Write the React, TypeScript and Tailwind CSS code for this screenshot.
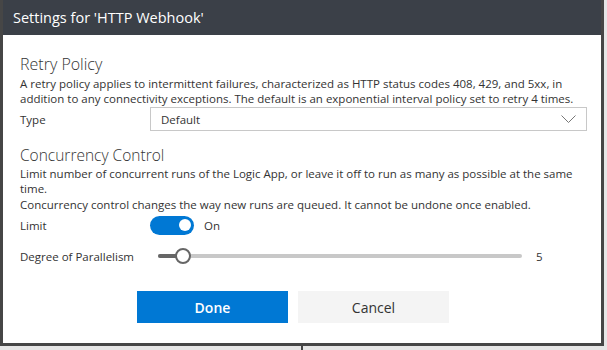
import { useState } from "react";

export default function App() {
    const [limit, setLimit] = useState(true);
    const [degree] = useState(5);

    return (
        <div
            className="w-[607px] h-[350px] bg-[#e6e6e6] flex flex-col"
            style={{ fontFamily: '"Open Sans", "Noto Sans", sans-serif' }}
        >
            <div className="w-[604px] h-[346px] border-[3px] border-t-0 border-[#464646] bg-white flex flex-col">
                {/* header */}
                <div className="h-[35px] bg-[#3b4048] flex items-center pl-[10px] text-white text-[14.5px]">
                    Settings for 'HTTP Webhook'
                </div>

                <div className="pl-[17px] pr-[14px] pt-[17px] text-[#333333] text-[11.5px] leading-[15px]">
                    {/* retry policy */}
                    <h2 className="text-[16px] leading-[24px] font-light">Retry Policy</h2>
                    <p>
                        A retry policy applies to intermittent failures, characterized as HTTP status codes 408,
                        429, and 5xx, in addition to any connectivity exceptions. The default is an exponential
                        interval policy set to retry 4 times.
                    </p>
                    <div className="flex items-center mt-[1px]">
                        <span className="w-[130px]">Type</span>
                        <div className="flex-1 h-[24px] border border-[#c8c8c8] flex items-center justify-between pl-[10px] pr-[10px]">
                            <span>Default</span>
                            <svg width="15" height="8" viewBox="0 0 15 8" fill="none" stroke="#777" strokeWidth="1">
                                <polyline points="0.5,0.5 7.5,7.5 14.5,0.5" />
                            </svg>
                        </div>
                    </div>

                    {/* concurrency */}
                    <h2 className="mt-[13px] text-[15.5px] leading-[22px] font-light">Concurrency Control</h2>
                    <p>
                        Limit number of concurrent runs of the Logic App, or leave it off to run as many as
                        possible at the same time.
                    </p>
                    <p className="mt-[1px]">
                        Concurrency control changes the way new runs are queued. It cannot be undone once enabled.
                    </p>

                    <div className="flex items-center mt-[3px] h-[20px]">
                        <span className="w-[130px]">Limit</span>
                        <button
                            onClick={() => setLimit(!limit)}
                            className={`w-[44px] h-[19px] rounded-full flex items-center px-[3px] ${
                                limit ? "bg-[#0078d4] justify-end" : "bg-white border border-[#666] justify-start"
                            }`}
                        >
                            <span className="w-[12px] h-[12px] rounded-full bg-white" />
                        </button>
                        <span className="ml-[10px]">{limit ? "On" : "Off"}</span>
                    </div>

                    <div className="flex items-center mt-[11px] h-[20px]">
                        <span className="w-[138px]">Degree of Parallelism</span>
                        <div className="relative w-[364px] h-[4px] rounded-full bg-[#c8c8c8]">
                            <div className="absolute left-0 top-0 h-[4px] w-[26px] rounded-full bg-[#666666]" />
                            <div className="absolute left-[17px] top-[-6px] w-[16px] h-[16px] rounded-full bg-white border-2 border-[#666666]" />
                        </div>
                        <span className="ml-[14px]">{degree}</span>
                    </div>

                    <div className="flex gap-[10px] mt-[25px] pl-[117px]">
                        <button className="w-[151px] h-[32px] bg-[#0078d4] text-white font-semibold text-[14px]">
                            Done
                        </button>
                        <button className="w-[151px] h-[32px] bg-[#f4f4f4] text-[#333333] text-[14px]">
                            Cancel
                        </button>
                    </div>
                </div>
            </div>
            <div className="flex-1 flex justify-center">
                <div className="w-[2px] ml-[-3px] bg-[#464646]" />
            </div>
        </div>
    );
}
